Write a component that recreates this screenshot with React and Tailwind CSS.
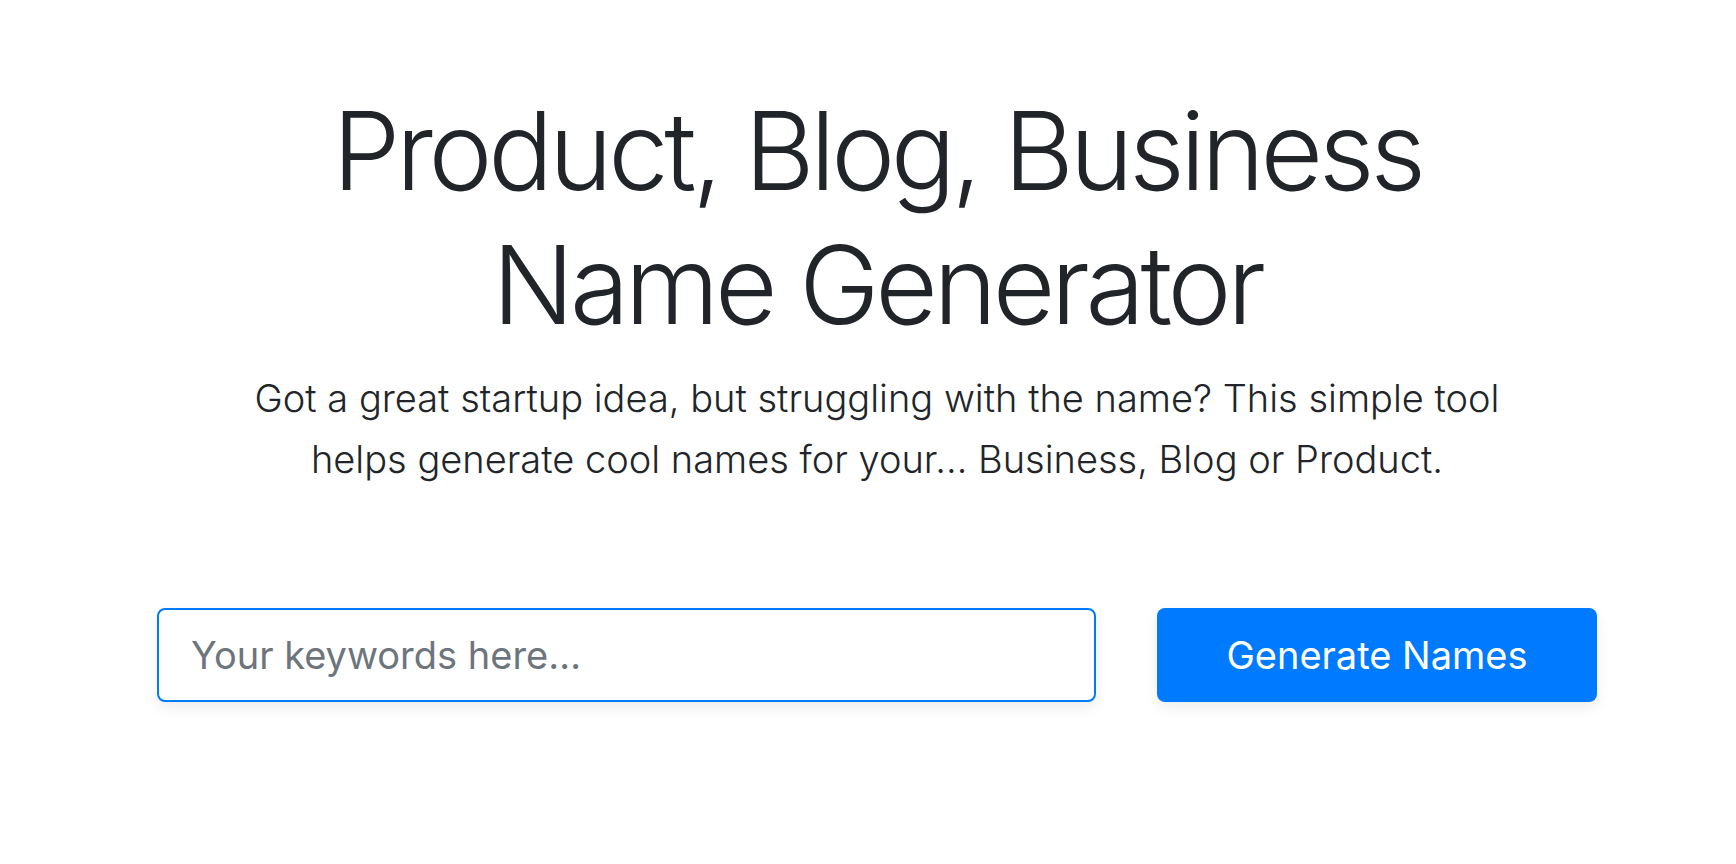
export default function App() {
    return (
        <div className="min-h-screen bg-white text-[#212529] font-['Inter','Noto_Sans',sans-serif]">
            <div className="flex flex-col items-center pt-[84px] pl-[18px]">
                <h1 className="text-center text-[108px] leading-[134px] font-light tracking-[-0.04em]">
                    Product, Blog, Business
                    <br />
                    Name Generator
                </h1>
                <p className="mt-[16px] text-center text-[38px] leading-[61px] font-light">
                    Got a great startup idea, but struggling with the name? This simple tool
                    <br />
                    helps generate cool names for your… Business, Blog or Product.
                </p>
                <div className="mt-[118px] flex gap-[61px]">
                    <input
                        type="text"
                        placeholder="Your keywords here…"
                        className="w-[939px] h-[94px] rounded-[8px] border-2 border-[#007bff] bg-white px-[32px] text-[38px] text-[#495057] placeholder:text-[#6c757d] outline-none shadow-[0_6px_14px_rgba(0,0,0,0.07)]"
                    />
                    <button className="w-[440px] h-[94px] rounded-[8px] bg-[#007bff] text-[38px] text-white shadow-[0_6px_14px_rgba(0,0,0,0.07)]">
                        Generate Names
                    </button>
                </div>
            </div>
        </div>
    )
}
